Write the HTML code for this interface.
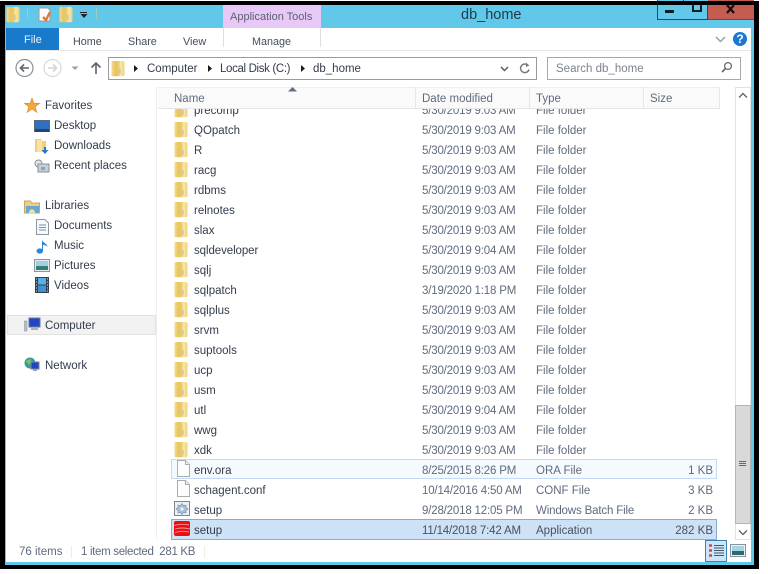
<!DOCTYPE html>
<html><head><meta charset="utf-8">
<style>
html,body{margin:0;padding:0;background:#fff}
#p{position:relative;width:768px;height:574px;overflow:hidden;background:#fff;font-family:"Liberation Sans",sans-serif;font-size:11.5px;color:#3c4a60;filter:blur(.35px)}
#p div,#p svg,#p span{position:absolute}
.t{white-space:nowrap;line-height:14px;margin-top:1px}
.r{position:absolute;left:0;top:0;width:0;height:0}
.n{color:#333c4c}.g{color:#5f6b7c}
.m{letter-spacing:-.18px}
</style></head><body><div id="p">
<svg width="0" height="0" style="position:absolute"><defs>
<linearGradient id="fg" x1="0" x2="1" y1="0" y2="0"><stop offset="0" stop-color="#f4dc92"/><stop offset=".3" stop-color="#e8c45f"/><stop offset=".55" stop-color="#eccb6c"/><stop offset=".7" stop-color="#f9e9ae"/><stop offset="1" stop-color="#efcf78"/></linearGradient>
<g id="f"><path d="M.5 2Q.5 1 2 1H11Q13.5 1 13.5 3V15Q13.5 16.2 11.5 16.2H2Q.5 16.2 .5 15Z" fill="url(#fg)"/><rect x="8.5" y="9" width="1" height="5" fill="#9fc0c8"/></g>
<g id="d"><path d="M1.5 .5H9.5L13.5 4.5V16.5H1.5Z" fill="#fdfdfd" stroke="#a9adb2"/><path d="M9.5 .5V4.5H13.5" fill="#eee" stroke="#a9adb2"/></g>
</defs></svg>

<!-- frame -->
<div style="left:657px;top:0;width:26px;height:2px;background:#62c8e9;border-left:1px solid #1d4f60"></div>
<div style="left:683px;top:0;width:25px;height:2px;background:#62c8e9;border-left:1px solid #1d4f60"></div>
<div style="left:708px;top:0;width:46px;height:2px;background:#c45c52"></div>
<div style="left:0;top:1px;width:759px;height:568px;background:#000"></div>
<div style="left:5px;top:5px;width:749px;height:560px;background:#62c8e9"></div>

<!-- title bar -->
<div style="left:223px;top:5px;width:98px;height:23px;background:#e8c8f6"></div>
<div class="t" style="left:230px;top:9px;color:#5a6272;font-size:11px">Application Tools</div>
<div class="t" style="left:461px;top:7px;color:#1f3a4c;font-size:14.5px">db_home</div>

<!-- caption buttons -->
<div style="left:657px;top:5px;width:25px;height:14px;border:1px solid #1d4f60;border-top:0;background:#62c8e9"></div>
<div style="left:683px;top:5px;width:24px;height:14px;border:1px solid #1d4f60;border-top:0;border-left:0;background:#62c8e9"></div>
<div style="left:708px;top:5px;width:46px;height:15px;background:#c45c52;border-bottom:1px solid #7c4440;box-sizing:border-box"></div>
<div style="left:665px;top:10px;width:9px;height:3px;background:#0c1c24"></div>
<div style="left:692px;top:5px;border:2px solid #0c1c24;border-top:0;width:6px;height:5px"></div>
<svg style="left:725px;top:5px" width="12" height="10"><path d="M2 0L9 8M9 0L2 8" stroke="#160c0c" stroke-width="2.2"/></svg>

<!-- QAT icons -->
<svg style="left:6px;top:6px" width="14" height="17"><use href="#f"/></svg>
<div style="left:27px;top:8px;width:1px;height:11px;background:#9cc"></div>
<svg style="left:38px;top:7px" width="14" height="16"><path d="M1 1H10L12 3V14H1Z" fill="#fdfdfd" stroke="#999"/><path d="M5 10L8 13L12 5" fill="none" stroke="#e0783a" stroke-width="2.4"/></svg>
<svg style="left:59px;top:6px" width="14" height="17"><use href="#f"/></svg>
<div style="left:80px;top:12px;width:7px;height:1px;background:#222"></div>
<svg style="left:80px;top:14px" width="8" height="5"><path d="M.5 0H7.5L4 4Z" fill="#222"/></svg>
<div style="left:96px;top:8px;width:1px;height:11px;background:#9cc"></div>

<!-- ribbon -->
<div style="left:6px;top:28px;width:745px;height:23px;background:#fff"></div>
<div style="left:6px;top:50px;width:745px;height:1px;background:#e4e6e8"></div>
<div style="left:6px;top:28px;width:53px;height:22px;background:#1979ca"></div>
<div class="t" style="left:24px;top:32px;color:#e8f2fa;font-size:11px">File</div>
<div class="t" style="left:73px;top:34px;font-size:10.8px;color:#444e5e">Home</div>
<div class="t" style="left:128px;top:34px;font-size:10.8px;color:#444e5e">Share</div>
<div class="t" style="left:183px;top:34px;font-size:10.8px;color:#444e5e">View</div>
<div class="t" style="left:252px;top:34px;font-size:10.8px;color:#444e5e">Manage</div>
<div style="left:223px;top:28px;width:1px;height:19px;background:#dfdfe2"></div>
<div style="left:320px;top:28px;width:1px;height:19px;background:#dfdfe2"></div>
<svg style="left:715px;top:36px" width="11" height="7"><path d="M1 1L5.5 5.5L10 1" fill="none" stroke="#9aa0a6" stroke-width="1.5"/></svg>
<div style="left:733px;top:32px;width:14px;height:14px;border-radius:50%;background:#1c78d0;color:#fff;font-weight:bold;font-size:12px;line-height:14px;text-align:center">?</div>

<!-- content bg -->
<div style="left:6px;top:51px;width:745px;height:511px;background:#fff"></div>

<!-- nav -->
<svg style="left:15px;top:58px" width="20" height="20"><circle cx="9.5" cy="10" r="8.5" fill="#fff" stroke="#8a8f95" stroke-width="1.2"/><path d="M14 10H6M9 6.5L5.5 10L9 13.5" fill="none" stroke="#5c6470" stroke-width="1.6"/></svg>
<svg style="left:43px;top:58px" width="20" height="20"><circle cx="9.5" cy="10" r="8.5" fill="#fff" stroke="#d8d8d8" stroke-width="1.2"/><path d="M5 10H13M10 6.5L13.5 10L10 13.5" fill="none" stroke="#d4d4d4" stroke-width="1.6"/></svg>
<svg style="left:71px;top:66px" width="8" height="5"><path d="M.5 .5H7.5L4 4Z" fill="#9aa0a6"/></svg>
<svg style="left:90px;top:61px" width="12" height="14"><path d="M6 13V2M1.5 6.5L6 2L10.5 6.5" fill="none" stroke="#5c6470" stroke-width="1.6"/></svg>

<!-- address -->
<div style="left:108px;top:57px;width:427px;height:21px;border:1px solid #9a9a9a;background:#fff"></div>
<svg style="left:111px;top:60px" width="14" height="17"><use href="#f"/></svg>
<svg style="left:133px;top:65px" width="6" height="7"><path d="M1 0L5 3.5L1 7Z" fill="#1c1c1c"/></svg>
<div class="t n" style="left:147px;top:61px">Computer</div>
<svg style="left:207px;top:65px" width="6" height="7"><path d="M1 0L5 3.5L1 7Z" fill="#1c1c1c"/></svg>
<div class="t n" style="left:220px;top:61px;letter-spacing:-.35px">Local Disk (C:)</div>
<svg style="left:300px;top:65px" width="6" height="7"><path d="M1 0L5 3.5L1 7Z" fill="#1c1c1c"/></svg>
<div class="t n" style="left:313px;top:61px">db_home</div>
<svg style="left:500px;top:66px" width="9" height="6"><path d="M1 1L4.5 4.5L8 1" fill="none" stroke="#555" stroke-width="1.4"/></svg>
<svg style="left:519px;top:61px" width="12" height="14"><path d="M9.5 5A4.3 4.3 0 1 0 10 8.5" fill="none" stroke="#777" stroke-width="1.4"/><path d="M7 1.5L10 4.5L7 6Z" fill="#777"/></svg>
<div style="left:547px;top:57px;width:192px;height:21px;border:1px solid #a8a8a8;background:#fff"></div>
<div class="t" style="left:556px;top:61px;color:#7b838e">Search db_home</div>
<svg style="left:720px;top:61px" width="13" height="13"><circle cx="8" cy="5" r="3.4" fill="none" stroke="#6a6a6a" stroke-width="1.3"/><path d="M5.5 7.5L2 11" stroke="#6a6a6a" stroke-width="1.8"/></svg>

<!-- sidebar -->
<div style="left:156px;top:87px;width:1px;height:452px;background:#eceef0"></div>
<svg style="left:24px;top:97px" width="17" height="17"><path d="M8 1L10 6.3H15.8L11.2 9.7L13 15.5L8 12L3 15.5L4.8 9.7L.2 6.3H6Z" fill="#f3a63c" stroke="#e08a2c" stroke-width=".6"/></svg>
<div class="t n" style="left:45px;top:98px">Favorites</div>
<svg style="left:34px;top:120px" width="16" height="13"><rect x=".5" y=".5" width="15" height="11" fill="#2e6fc4" stroke="#5a6a7c"/><rect x="1" y="9" width="14" height="3" fill="#25456e"/></svg>
<div class="t n" style="left:54px;top:118px">Desktop</div>
<svg style="left:35px;top:138px" width="15" height="17"><path d="M0 1H6L7 3H11V14H0Z" fill="#efcf78"/><rect x="2" y="2" width="5" height="12" fill="#f7e3a5"/><path d="M9 9V12H6.5L10 16L13.5 12H11V9Z" fill="#2878c8"/></svg>
<div class="t n" style="left:54px;top:138px">Downloads</div>
<svg style="left:34px;top:159px" width="16" height="15"><rect x="1" y="1" width="7" height="7" rx="3.5" fill="#e4e8ec" stroke="#8a929a"/><rect x="4" y="5" width="11" height="8" fill="#c8ced6" stroke="#8a929a"/><rect x="7" y="8" width="4" height="3" fill="#7ea6ce"/></svg>
<div class="t n" style="left:54px;top:158px">Recent places</div>
<svg style="left:24px;top:199px" width="17" height="15"><path d="M.5 2H6.5L8 4H15.5V14H.5Z" fill="#efcf88" stroke="#c9a85e"/><path d="M2 7H15V14H2Z" fill="#6aa9c9"/><path d="M5 14C5 9 11 9 11 14" fill="#f0e0a8"/></svg>
<div class="t n" style="left:45px;top:198px">Libraries</div>
<svg style="left:36px;top:219px" width="13" height="16"><path d="M.5 .5H9L12.5 4V15.5H.5Z" fill="#f8f9fa" stroke="#8d97a3"/><path d="M3 6H10M3 8.5H10M3 11H10" stroke="#6f8fb4"/></svg>
<div class="t n" style="left:54px;top:218px">Documents</div>
<svg style="left:36px;top:239px" width="13" height="15"><ellipse cx="3.8" cy="12" rx="3.3" ry="2.6" fill="#2e86d6"/><path d="M6 12V1C7 4 11 4 11.5 8C10 6 8 6 7 6V12Z" fill="#2e86d6"/></svg>
<div class="t n" style="left:54px;top:238px">Music</div>
<svg style="left:34px;top:259px" width="16" height="13"><rect x=".5" y=".5" width="15" height="12" fill="#e7ebef" stroke="#8c949c"/><rect x="2" y="2" width="12" height="5" fill="#9fd0dc"/><rect x="2" y="7" width="12" height="4" fill="#2f7f72"/></svg>
<div class="t n" style="left:54px;top:258px">Pictures</div>
<svg style="left:35px;top:277px" width="14" height="16"><rect width="14" height="16" fill="#34424e"/><rect x="3" y="1" width="8" height="6.5" fill="#59b0e8"/><rect x="3" y="8.5" width="8" height="6.5" fill="#3f90d4"/><path d="M1 2H2M1 5H2M1 8H2M1 11H2M1 14H2M12 2H13M12 5H13M12 8H13M12 11H13M12 14H13" stroke="#ddd"/></svg>
<div class="t n" style="left:54px;top:278px">Videos</div>
<div style="left:7px;top:315px;width:147px;height:18px;background:#f2f2f2;border:1px solid #e2e2e2"></div>
<svg style="left:24px;top:317px" width="17" height="15"><rect x="5" y="1" width="11" height="9" fill="#1f46c8" stroke="#6f7a88"/><rect x="0" y="4" width="3" height="10" fill="#b8bec4" stroke="#8a929a" stroke-width=".5"/><rect x="7" y="10" width="7" height="3" fill="#aab0b8"/></svg>
<div class="t n" style="left:45px;top:318px">Computer</div>
<svg style="left:24px;top:357px" width="17" height="16"><circle cx="6" cy="6" r="5.5" fill="#3c9a9a"/><path d="M2 4L6 2L8 5L5 8Z" fill="#7cc070"/><rect x="7" y="5" width="8" height="7" fill="#1f46c8" stroke="#7a8490"/><rect x="9" y="12" width="4" height="2" fill="#98a0a8"/></svg>
<div class="t n" style="left:45px;top:358px">Network</div>

<!-- list header -->
<div style="left:158px;top:87px;width:562px;height:22px;background:#fafafa;border-top:1px solid #eeeeee;border-bottom:1px solid #e6e6e6;box-sizing:border-box"></div>
<div style="left:415px;top:87px;width:1px;height:22px;background:#e4e6e8"></div>
<div style="left:529px;top:87px;width:1px;height:22px;background:#e4e6e8"></div>
<div style="left:643px;top:87px;width:1px;height:22px;background:#e4e6e8"></div>
<div style="left:719px;top:87px;width:1px;height:22px;background:#e4e6e8"></div>
<svg style="left:288px;top:87px" width="9" height="5"><path d="M0 4.5L4.5 0L9 4.5Z" fill="#5e7088"/></svg>
<div class="t g" style="left:174px;top:91px">Name</div>
<div class="t g" style="left:422px;top:91px">Date modified</div>
<div class="t g" style="left:536px;top:91px">Type</div>
<div class="t g" style="left:650px;top:91px">Size</div>

<!-- list rows clip -->
<div style="left:158px;top:109px;width:576px;height:431px;overflow:hidden">
<div class="r" style="top:-109px;left:-158px">
<div style="left:171px;top:459px;width:544px;height:18px;background:#f5fafe;border:1px solid #c3d9f4"></div>
<div style="left:171px;top:519px;width:544px;height:19px;background:#cde1f7;border:1px solid #84ace0"></div>

<svg style="left:174px;top:101px" width="14" height="17"><use href="#f"/></svg><div class="t n" style="left:194px;top:103px">precomp</div><div class="t g m" style="left:422px;top:103px">5/30/2019 9:03 AM</div><div class="t g" style="left:536px;top:103px">File folder</div>
<svg style="left:174px;top:121px" width="14" height="17"><use href="#f"/></svg><div class="t n" style="left:194px;top:123px">QOpatch</div><div class="t g m" style="left:422px;top:123px">5/30/2019 9:03 AM</div><div class="t g" style="left:536px;top:123px">File folder</div>
<svg style="left:174px;top:141px" width="14" height="17"><use href="#f"/></svg><div class="t n" style="left:194px;top:143px">R</div><div class="t g m" style="left:422px;top:143px">5/30/2019 9:03 AM</div><div class="t g" style="left:536px;top:143px">File folder</div>
<svg style="left:174px;top:161px" width="14" height="17"><use href="#f"/></svg><div class="t n" style="left:194px;top:163px">racg</div><div class="t g m" style="left:422px;top:163px">5/30/2019 9:03 AM</div><div class="t g" style="left:536px;top:163px">File folder</div>
<svg style="left:174px;top:181px" width="14" height="17"><use href="#f"/></svg><div class="t n" style="left:194px;top:183px">rdbms</div><div class="t g m" style="left:422px;top:183px">5/30/2019 9:03 AM</div><div class="t g" style="left:536px;top:183px">File folder</div>
<svg style="left:174px;top:201px" width="14" height="17"><use href="#f"/></svg><div class="t n" style="left:194px;top:203px">relnotes</div><div class="t g m" style="left:422px;top:203px">5/30/2019 9:03 AM</div><div class="t g" style="left:536px;top:203px">File folder</div>
<svg style="left:174px;top:221px" width="14" height="17"><use href="#f"/></svg><div class="t n" style="left:194px;top:223px">slax</div><div class="t g m" style="left:422px;top:223px">5/30/2019 9:03 AM</div><div class="t g" style="left:536px;top:223px">File folder</div>
<svg style="left:174px;top:241px" width="14" height="17"><use href="#f"/></svg><div class="t n" style="left:194px;top:243px;letter-spacing:-.08px">sqldeveloper</div><div class="t g m" style="left:422px;top:243px">5/30/2019 9:04 AM</div><div class="t g" style="left:536px;top:243px">File folder</div>
<svg style="left:174px;top:261px" width="14" height="17"><use href="#f"/></svg><div class="t n" style="left:194px;top:263px">sqlj</div><div class="t g m" style="left:422px;top:263px">5/30/2019 9:03 AM</div><div class="t g" style="left:536px;top:263px">File folder</div>
<svg style="left:174px;top:281px" width="14" height="17"><use href="#f"/></svg><div class="t n" style="left:194px;top:283px">sqlpatch</div><div class="t g m" style="left:422px;top:283px">3/19/2020 1:18 PM</div><div class="t g" style="left:536px;top:283px">File folder</div>
<svg style="left:174px;top:301px" width="14" height="17"><use href="#f"/></svg><div class="t n" style="left:194px;top:303px">sqlplus</div><div class="t g m" style="left:422px;top:303px">5/30/2019 9:03 AM</div><div class="t g" style="left:536px;top:303px">File folder</div>
<svg style="left:174px;top:321px" width="14" height="17"><use href="#f"/></svg><div class="t n" style="left:194px;top:323px">srvm</div><div class="t g m" style="left:422px;top:323px">5/30/2019 9:03 AM</div><div class="t g" style="left:536px;top:323px">File folder</div>
<svg style="left:174px;top:341px" width="14" height="17"><use href="#f"/></svg><div class="t n" style="left:194px;top:343px">suptools</div><div class="t g m" style="left:422px;top:343px">5/30/2019 9:03 AM</div><div class="t g" style="left:536px;top:343px">File folder</div>
<svg style="left:174px;top:361px" width="14" height="17"><use href="#f"/></svg><div class="t n" style="left:194px;top:363px">ucp</div><div class="t g m" style="left:422px;top:363px">5/30/2019 9:03 AM</div><div class="t g" style="left:536px;top:363px">File folder</div>
<svg style="left:174px;top:381px" width="14" height="17"><use href="#f"/></svg><div class="t n" style="left:194px;top:383px">usm</div><div class="t g m" style="left:422px;top:383px">5/30/2019 9:03 AM</div><div class="t g" style="left:536px;top:383px">File folder</div>
<svg style="left:174px;top:401px" width="14" height="17"><use href="#f"/></svg><div class="t n" style="left:194px;top:403px">utl</div><div class="t g m" style="left:422px;top:403px">5/30/2019 9:04 AM</div><div class="t g" style="left:536px;top:403px">File folder</div>
<svg style="left:174px;top:421px" width="14" height="17"><use href="#f"/></svg><div class="t n" style="left:194px;top:423px">wwg</div><div class="t g m" style="left:422px;top:423px">5/30/2019 9:03 AM</div><div class="t g" style="left:536px;top:423px">File folder</div>
<svg style="left:174px;top:441px" width="14" height="17"><use href="#f"/></svg><div class="t n" style="left:194px;top:443px">xdk</div><div class="t g m" style="left:422px;top:443px">5/30/2019 9:03 AM</div><div class="t g" style="left:536px;top:443px">File folder</div>

<svg style="left:176px;top:460px" width="15" height="18"><use href="#d"/></svg><div class="t n" style="left:194px;top:463px">env.ora</div><div class="t g m" style="left:422px;top:463px">8/25/2015 8:26 PM</div><div class="t g" style="left:536px;top:463px">ORA File</div><div class="t g" style="left:640px;top:463px;width:73px;text-align:right">1 KB</div>
<svg style="left:176px;top:480px" width="15" height="18"><use href="#d"/></svg><div class="t n" style="left:194px;top:483px">schagent.conf</div><div class="t g m" style="left:422px;top:483px">10/14/2016 4:50 AM</div><div class="t g" style="left:536px;top:483px">CONF File</div><div class="t g" style="left:640px;top:483px;width:73px;text-align:right">3 KB</div>
<svg style="left:174px;top:501px" width="16" height="15"><rect x=".5" y=".5" width="15" height="14" fill="#eef1f4" stroke="#7f8790"/><path d="M8 2.5L9.5 4.5L12 4L12 6.5L14 8L12 9.5L12 12L9.5 11.5L8 13.5L6.5 11.5L4 12L4 9.5L2 8L4 6.5L4 4L6.5 4.5Z" fill="#a9bfd6" stroke="#6f8aa8" stroke-width=".6"/><circle cx="8" cy="8" r="1.6" fill="#eef1f4"/></svg><div class="t n" style="left:194px;top:503px">setup</div><div class="t g m" style="left:422px;top:503px">9/28/2018 12:05 PM</div><div class="t g" style="left:536px;top:503px;letter-spacing:-.16px">Windows Batch File</div><div class="t g" style="left:640px;top:503px;width:73px;text-align:right">2 KB</div>
<svg style="left:174px;top:521px" width="16" height="15"><rect x="0" y="0" width="16" height="15" rx="2" fill="#ee0d12"/><path d="M0 4.5Q8 2.5 15 4M1 8Q8 6 16 8M1 11.5Q8 9.5 15 11" stroke="#f59a9a" stroke-width=".9" fill="none"/></svg><div class="t n" style="left:194px;top:523px">setup</div><div class="t g m" style="left:422px;top:523px;color:#47525f">11/14/2018 7:42 AM</div><div class="t g" style="left:536px;top:523px;color:#47525f">Application</div><div class="t g" style="left:640px;top:523px;width:73px;text-align:right;color:#47525f">282 KB</div>
</div></div>

<!-- scrollbar -->
<div style="left:735px;top:87px;width:16px;height:453px;background:#fff;border:1px solid #e2e2e2;box-sizing:border-box"></div>
<svg style="left:738px;top:92px" width="10" height="7"><path d="M1 5.5L5 1.5L9 5.5" fill="none" stroke="#606060" stroke-width="1.3"/></svg>
<div style="left:735px;top:405px;width:16px;height:119px;background:#d9d9d9;border:1px solid #b4b4b4;box-sizing:border-box"></div>
<div style="left:739px;top:461px;width:7px;height:1px;background:#666"></div>
<div style="left:739px;top:463px;width:7px;height:1px;background:#666"></div>
<div style="left:739px;top:465px;width:7px;height:1px;background:#666"></div>
<svg style="left:738px;top:529px" width="10" height="7"><path d="M1 1.5L5 5.5L9 1.5" fill="none" stroke="#606060" stroke-width="1.3"/></svg>

<!-- status -->
<div class="t g" style="left:19px;top:544px">76 items</div>
<div style="left:71px;top:546px;width:1px;height:12px;background:#eee"></div>
<div class="t g" style="left:81px;top:544px;letter-spacing:-.32px">1 item selected&nbsp; 281 KB</div>
<div style="left:204px;top:546px;width:1px;height:12px;background:#eee"></div>
<div style="left:705px;top:540px;width:20px;height:20px;background:#cde6f7;border:1px solid #3c7fb1"></div>
<svg style="left:709px;top:544px" width="16" height="14"><path d="M0 1.5H3M0 6.5H3M0 11.5H3" stroke="#d04848" stroke-width="2.4"/><path d="M5 1.5H15M5 6.5H15M5 11.5H15M5 4H15M5 9H15" stroke="#44586c" stroke-width="1"/></svg>
<svg style="left:730px;top:544px" width="17" height="14"><rect x=".5" y=".5" width="15" height="12" fill="#eef1f4" stroke="#8a929a"/><rect x="2" y="2" width="12" height="5" fill="#a7d4e0"/><rect x="2" y="7" width="12" height="4" fill="#2c6a70"/></svg>
</div></body></html>
